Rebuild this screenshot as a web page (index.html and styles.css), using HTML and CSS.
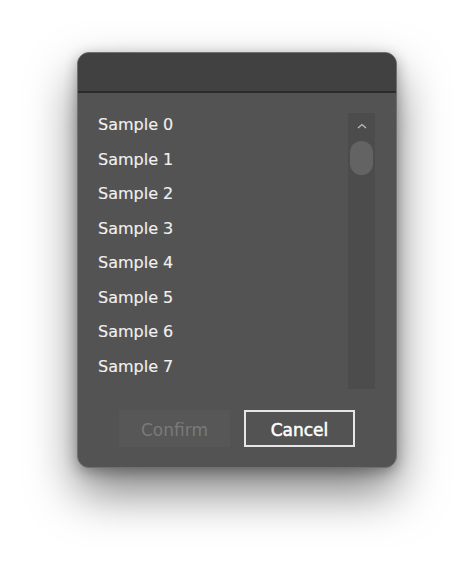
FILE: index.html
```html
<!DOCTYPE html>
<html>
<head>
<meta charset="utf-8">
<link rel="stylesheet" href="styles.css">
</head>
<body>
<div class="dialog">
  <div class="header"></div>
  <div class="content">
    <ul class="list">
      <li>Sample 0</li>
      <li>Sample 1</li>
      <li>Sample 2</li>
      <li>Sample 3</li>
      <li>Sample 4</li>
      <li>Sample 5</li>
      <li>Sample 6</li>
      <li>Sample 7</li>
    </ul>
    <div class="scrollbar">
      <svg class="arrow" width="10" height="6" viewBox="0 0 10 6"><path d="M1 5 L5 1.5 L9 5" fill="none" stroke="#bdbdbd" stroke-width="1.3"/></svg>
      <div class="thumb"></div>
    </div>
  </div>
  <div class="actions">
    <button class="btn confirm" disabled>Confirm</button>
    <button class="btn cancel">Cancel</button>
  </div>
</div>
</body>
</html>
```
FILE: styles.css
```css
html, body {
  margin: 0;
  padding: 0;
  background: #ffffff;
}
html {
  min-height: 571px;
}
body {
  min-height: 571px;
  box-sizing: border-box;
  padding-top: 52px;
  padding-left: 77px;
  font-family: "DejaVu Sans", "Open Sans", sans-serif;
}
.dialog {
  width: 320px;
  height: 416px;
  box-sizing: border-box;
  background: #535353;
  border: 1px solid #707070;
  border-radius: 12px;
  overflow: hidden;
  display: flex;
  flex-direction: column;
  box-shadow: 0 24px 48px rgba(0,0,0,0.5), 0 4px 14px rgba(0,0,0,0.3);
}
.header {
  height: 38px;
  flex: none;
  background: #414141;
  border-bottom: 2px solid #2b2b2b;
}
.content {
  display: flex;
  padding: 20px 21px 0 20px;
}
.list {
  list-style: none;
  margin: 0;
  padding: 0;
  flex: 1;
}
.list li {
  height: 34.5px;
  line-height: 24px;
  color: #f0f0f0;
  font-size: 16px;
  -webkit-text-stroke: 0.15px #f0f0f0;
}
.scrollbar {
  width: 27px;
  height: 276px;
  background: #4c4c4c;
  display: flex;
  flex-direction: column;
  align-items: center;
}
.arrow {
  margin-top: 10px;
  display: block;
}
.thumb {
  margin-top: 12px;
  width: 23px;
  height: 34px;
  border-radius: 12px;
  background: #636363;
}
.actions {
  display: flex;
  justify-content: center;
  gap: 14px;
  padding-top: 21px;
}
.btn {
  width: 111px;
  height: 37px;
  box-sizing: border-box;
  font-family: inherit;
  font-size: 17px;
  padding: 3px 0 0;
  border-radius: 0;
  margin: 0;
}
.confirm {
  background: #575757;
  border: none;
  color: #7a7a7a;
}
.cancel {
  background: #535353;
  border: 2px solid #e6e6e6;
  color: #ffffff;
  -webkit-text-stroke: 0.5px #ffffff;
}
```
